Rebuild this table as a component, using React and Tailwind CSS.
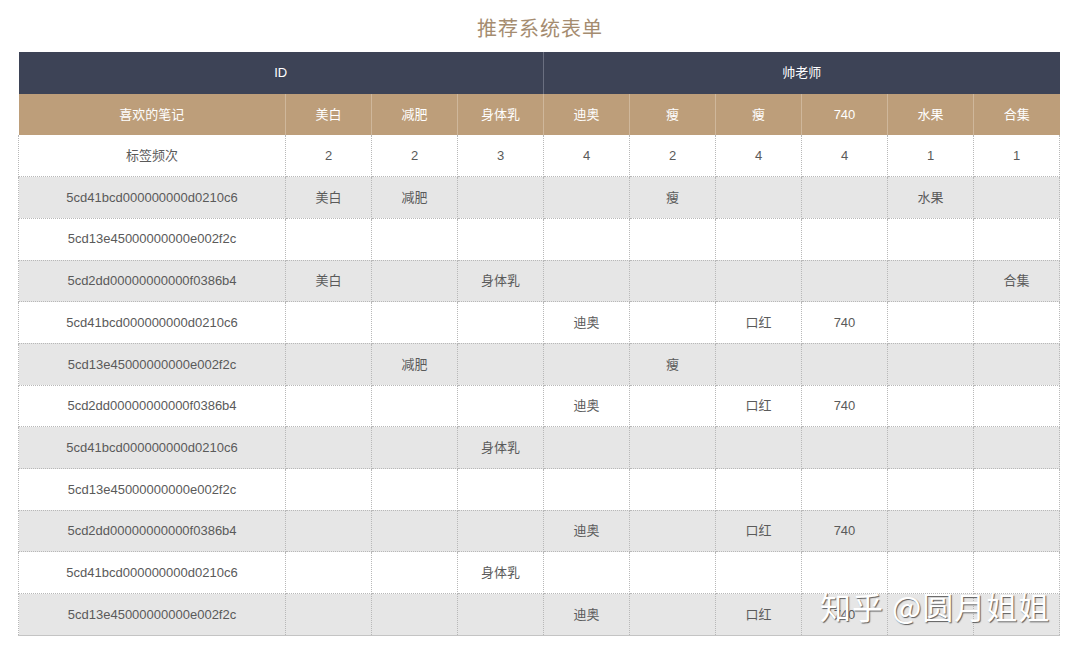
import React from "react";

const ids = [
  "5cd41bcd000000000d0210c6",
  "5cd13e45000000000e002f2c",
  "5cd2dd00000000000f0386b4",
];

const tags = ["美白", "减肥", "身体乳", "迪奥", "瘦", "瘦", "740", "水果", "合集"];
const freq = ["2", "2", "3", "4", "2", "4", "4", "1", "1"];

const rows = [
  { id: ids[0], v: ["美白", "减肥", "", "", "瘦", "", "", "水果", ""] },
  { id: ids[1], v: ["", "", "", "", "", "", "", "", ""] },
  { id: ids[2], v: ["美白", "", "身体乳", "", "", "", "", "", "合集"] },
  { id: ids[0], v: ["", "", "", "迪奥", "", "口红", "740", "", ""] },
  { id: ids[1], v: ["", "减肥", "", "", "瘦", "", "", "", ""] },
  { id: ids[2], v: ["", "", "", "迪奥", "", "口红", "740", "", ""] },
  { id: ids[0], v: ["", "", "身体乳", "", "", "", "", "", ""] },
  { id: ids[1], v: ["", "", "", "", "", "", "", "", ""] },
  { id: ids[2], v: ["", "", "", "迪奥", "", "口红", "740", "", ""] },
  { id: ids[0], v: ["", "", "身体乳", "", "", "", "", "", ""] },
  { id: ids[1], v: ["", "", "", "迪奥", "", "口红", "740", "", ""] },
];

const font = { fontFamily: '"Liberation Sans", "Noto Sans CJK SC", sans-serif' };

export default function App() {
  return (
    <div
      className="relative w-[1080px] h-[653px] bg-white overflow-hidden"
      style={font}
    >
      <div className="h-[52px] flex items-center justify-center pt-[6px] text-[20px] text-[#a58c70] tracking-[1px]">
        推荐系统表单
      </div>
      <div className="pl-[18px]">
        <table className="w-[1042px] table-fixed border-collapse text-[13px]">
          <colgroup>
            <col className="w-[267px]" />
            <col />
            <col />
            <col />
            <col />
            <col />
            <col />
            <col />
            <col />
            <col />
          </colgroup>
          <thead>
            <tr className="h-[42px] bg-[#3d4356] text-white">
              <th
                colSpan={4}
                className="font-normal text-center border-r border-[#6a6f80]"
              >
                ID
              </th>
              <th colSpan={6} className="font-normal text-center">
                帅老师
              </th>
            </tr>
            <tr className="h-[41px] bg-[#bd9e7a] text-white">
              <th className="font-normal text-center border-r border-[#cfb79b]">
                喜欢的笔记
              </th>
              {tags.map((t, i) => (
                <th
                  key={i}
                  className={
                    "font-normal text-center " +
                    (i < 8 ? "border-r border-[#cfb79b]" : "")
                  }
                >
                  {t}
                </th>
              ))}
            </tr>
          </thead>
          <tbody className="text-[#5a5a5a]">
            <tr className="h-[41.7px] bg-white">
              <td className="text-center border-l border-r border-b border-dotted border-[#b8b8b8]">
                标签频次
              </td>
              {freq.map((f, i) => (
                <td
                  key={i}
                  className="text-center border-r border-b border-dotted border-[#b8b8b8]"
                >
                  {f}
                </td>
              ))}
            </tr>
            {rows.map((r, ri) => (
              <tr
                key={ri}
                className={
                  "h-[41.7px] " + (ri % 2 === 0 ? "bg-[#e6e6e6]" : "bg-white")
                }
              >
                <td
                  className={
                    "text-center border-l border-r border-b border-dotted border-[#b8b8b8] " +
                    (ri === rows.length - 1
                      ? "[border-bottom-style:solid] border-b-[#c4c4c4]"
                      : "")
                  }
                >
                  {r.id}
                </td>
                {r.v.map((c, ci) => (
                  <td
                    key={ci}
                    className={
                      "text-center border-r border-b border-dotted border-[#b8b8b8] " +
                      (ri === rows.length - 1
                        ? "[border-bottom-style:solid] border-b-[#c4c4c4]"
                        : "")
                    }
                  >
                    {c}
                  </td>
                ))}
              </tr>
            ))}
          </tbody>
        </table>
      </div>
      <div
        className="absolute left-[820px] top-[586px] text-[31px] leading-[40px] text-white tracking-[1px] [text-shadow:1px_1px_1px_rgba(60,60,60,0.8)]"
        style={{ fontFamily: '"Noto Sans CJK SC", sans-serif' }}
      >
        知乎 @圆月姐姐
      </div>
    </div>
  );
}
